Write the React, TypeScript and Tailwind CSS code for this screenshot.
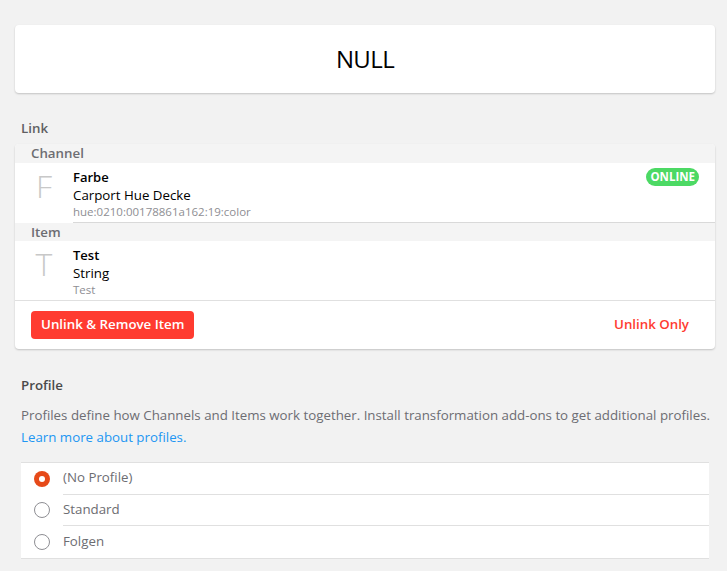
import React from "react";

const font = { fontFamily: '"Open Sans", "Noto Sans", sans-serif' };

function ListRow({ letter, title, subtitle, footer, badge }: { letter: string; title: string; subtitle: string; footer: string; badge?: string }) {
  return (
    <div className="flex items-start bg-white h-[59px]">
      <div className="w-[58px] shrink-0 flex justify-center pt-[3px] text-[32px] leading-[40px] font-light text-[#c8c8c8]">{letter}</div>
      <div className="flex-1 pt-[5px]">
        <div className="flex justify-between items-start pr-[16px]">
          <div className="text-[13px] leading-[18px] font-semibold text-black">{title}</div>
          {badge && (
            <span className="rounded-full bg-[#4cd964] text-white text-[11.5px] leading-[18px] font-bold px-[4px]">{badge}</span>
          )}
        </div>
        <div className="text-[13.3px] leading-[18px] text-black">{subtitle}</div>
        <div className="text-[11.5px] leading-[16px] text-[#8e8e93]">{footer}</div>
      </div>
    </div>
  );
}

export default function App() {
  return (
    <div className="min-h-[571px] bg-[#f2f2f2] pt-[25px] pl-[15px] pr-[12px]" style={font}>
      {/* status card */}
      <div className="bg-white rounded-[4px] shadow-[0_1px_2px_rgba(0,0,0,0.2)] h-[68px] flex items-center justify-center">
        <span className="text-[24px] text-black tracking-tight">NULL</span>
      </div>

      <div className="mt-[26px] px-[6px] text-[13.3px] leading-[18px] font-semibold text-[#5f5f63]">Link</div>

      <div className="mt-[7px] bg-white rounded-[4px] shadow-[0_1px_2px_rgba(0,0,0,0.2)] overflow-hidden">
        <div className="bg-[#f4f4f4] h-[19px] px-[16px] text-[13.3px] leading-[19px] font-semibold text-[#6d6d72]">Channel</div>
        <ListRow letter="F" title="Farbe" subtitle="Carport Hue Decke" footer="hue:0210:00178861a162:19:color" badge="ONLINE" />
        <div className="bg-white pl-[58px]"><div className="h-px bg-[#d9d9d9]" /></div>
        <div className="bg-[#f4f4f4] h-[18px] px-[16px] text-[13.3px] leading-[18px] font-semibold text-[#6d6d72]">Item</div>
        <ListRow letter="T" title="Test" subtitle="String" footer="Test" />
        <div className="h-px bg-[#e0e0e0]" />
        <div className="h-[48px] flex items-center justify-between pl-[16px] pr-[26px]">
          <button className="h-[28px] px-[10px] rounded-[4px] bg-[#ff3b30] text-white text-[13.3px] font-semibold">Unlink &amp; Remove Item</button>
          <button className="text-[13.3px] font-semibold text-[#ff3b30]">Unlink Only</button>
        </div>
      </div>

      <div className="mt-[27px] px-[6px] text-[13.3px] leading-[18px] font-semibold text-[#4a4a4a]">Profile</div>
      <div className="mt-[10px] pl-[6px] text-[13.3px] leading-[22px] text-[#6d6d72]">
        <div className="whitespace-nowrap">Profiles define how Channels and Items work together. Install transformation add-ons to get additional profiles.</div>
        <a className="block text-[#2196f3]">Learn more about profiles.</a>
      </div>

      <div className="mt-[14px] ml-[6px] mr-[6px] bg-white border-y border-[#e0e0e0]">
        {["(No Profile)", "Standard", "Folgen"].map((label, i) => (
          <div key={label} className="flex items-center h-[31.5px]">
            <div className="w-[42px] shrink-0 flex justify-center">
              {i === 0 ? (
                <span className="w-[16px] h-[16px] rounded-full bg-[#e64a19] flex items-center justify-center">
                  <span className="w-[6px] h-[6px] rounded-full bg-white" />
                </span>
              ) : (
                <span className="w-[16px] h-[16px] rounded-full border border-[#8e8e93]" />
              )}
            </div>
            <div className={`flex-1 h-full flex items-center text-[13.3px] text-[#6d6d72] ${i < 2 ? "border-b border-[#e0e0e0]" : ""}`}>{label}</div>
          </div>
        ))}
      </div>
    </div>
  );
}
